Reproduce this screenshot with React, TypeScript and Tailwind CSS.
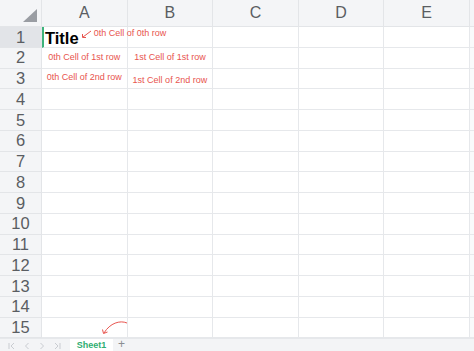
const cols = ["A", "B", "C", "D", "E"];
const rows = Array.from({ length: 15 }, (_, i) => i + 1);

const redText = "text-[9px] text-[#e8544e] whitespace-nowrap leading-none";

function Cell({ row, col }: { row: number; col: number }) {
  const base = "w-[85.6px] shrink-0 border-r border-b border-[#e6e8eb] relative flex";

  if (row === 1 && col === 0) {
    return (
      <div className={`${base} items-center border-l-2 border-l-[#3db37b] pl-[1px] z-10`}>
        <span className="text-[16.5px] font-bold text-black leading-none mt-[2px]">Title</span>
        <svg width="11" height="9" viewBox="0 0 11 9" className="ml-[2px] -mt-[4px] shrink-0">
          <path d="M10 1 L2 7" stroke="#e8544e" strokeWidth="1" fill="none" />
          <path d="M1.5 4 L1.5 7.5 L5 7.5" stroke="#e8544e" strokeWidth="1" fill="none" />
        </svg>
        <span className={`${redText} ml-[2px] -mt-[6px]`}>0th Cell of 0th row</span>
      </div>
    );
  }
  if (row === 2 && col === 0) {
    return (
      <div className={`${base} items-center justify-center`}>
        <span className={redText}>0th Cell of 1st row</span>
      </div>
    );
  }
  if (row === 2 && col === 1) {
    return (
      <div className={`${base} items-center justify-center`}>
        <span className={redText}>1st Cell of 1st row</span>
      </div>
    );
  }
  if (row === 3 && col === 0) {
    return (
      <div className={`${base} items-start justify-center pt-[4px]`}>
        <span className={redText}>0th Cell of 2nd row</span>
      </div>
    );
  }
  if (row === 3 && col === 1) {
    return (
      <div className={`${base} items-end justify-center pb-[3px]`}>
        <span className={redText}>1st Cell of 2nd row</span>
      </div>
    );
  }
  return <div className={base} />;
}

function NavIcons() {
  return (
    <div className="flex items-center gap-[7px] pl-[8px] text-[#c9ccd1]">
      <svg width="8" height="8" viewBox="0 0 8 8">
        <path d="M1 1 V7 M6 1 L3 4 L6 7" stroke="currentColor" strokeWidth="1" fill="none" />
      </svg>
      <svg width="8" height="8" viewBox="0 0 8 8">
        <path d="M5.5 1 L2.5 4 L5.5 7" stroke="currentColor" strokeWidth="1" fill="none" />
      </svg>
      <svg width="8" height="8" viewBox="0 0 8 8">
        <path d="M2.5 1 L5.5 4 L2.5 7" stroke="currentColor" strokeWidth="1" fill="none" />
      </svg>
      <svg width="8" height="8" viewBox="0 0 8 8">
        <path d="M2 1 L5 4 L2 7 M7 1 V7" stroke="currentColor" strokeWidth="1" fill="none" />
      </svg>
    </div>
  );
}

export default function App() {
  return (
    <div className="w-[474px] h-[351px] overflow-hidden bg-white relative font-['Liberation_Sans',Arial,sans-serif]">
      {/* column header */}
      <div className="flex h-[27px]">
        <div className="w-[42px] shrink-0 bg-[#f4f5f7] border-r border-b border-[#e3e5e8] relative">
          <svg width="14" height="13" viewBox="0 0 14 13" className="absolute left-[23px] top-[9px]">
            <path d="M14 0 L14 13 L0 13 Z" fill="#9a9da3" />
          </svg>
        </div>
        {cols.map((c) => (
          <div
            key={c}
            className="w-[85.6px] shrink-0 bg-[#f4f5f7] border-r border-b border-[#e3e5e8] flex items-center justify-center text-[16px] text-[#5a5d62]"
          >
            {c}
          </div>
        ))}
        <div className="flex-1 bg-[#f4f5f7] border-b border-[#e3e5e8]" />
      </div>

      {rows.map((r) => (
        <div key={r} className="flex h-[20.75px]">
          <div
            className={`w-[42px] shrink-0 border-r border-b border-[#e3e5e8] flex items-center justify-center text-[16.5px] text-[#5a5d62] ${
              r === 1 ? "bg-[#e2e4e8]" : "bg-[#f4f5f7]"
            }`}
          >
            {r}
          </div>
          {cols.map((c, ci) => (
            <Cell key={c} row={r} col={ci} />
          ))}
          <div className="flex-1 border-b border-[#e6e8eb] bg-[#f9fafb]" />
        </div>
      ))}

      {/* sheet tab bar */}
      <div className="flex items-stretch h-[20px] bg-[#f3f4f6] border-t border-[#e6e8eb]">
        <div className="flex items-start pt-[3px]">
          <NavIcons />
        </div>
        <div className="ml-[9px] w-[43px] bg-white flex items-start justify-center pt-[2px]">
          <span className="text-[9px] font-bold text-[#2fae72] leading-none">Sheet1</span>
        </div>
        <div className="ml-[5px] text-[12px] leading-[12px] text-[#8a8d92] -mt-[1px]">+</div>
      </div>

      {/* curved arrow pointing at tab */}
      <svg width="30" height="16" viewBox="0 0 30 16" className="absolute left-[100px] top-[320px]">
        <path d="M27 3 C20 0 10 3 4 13" stroke="#e8544e" strokeWidth="1" fill="none" />
        <path d="M2.5 9.5 L3.5 13.5 L7.5 12" stroke="#e8544e" strokeWidth="1" fill="none" />
      </svg>
    </div>
  );
}
